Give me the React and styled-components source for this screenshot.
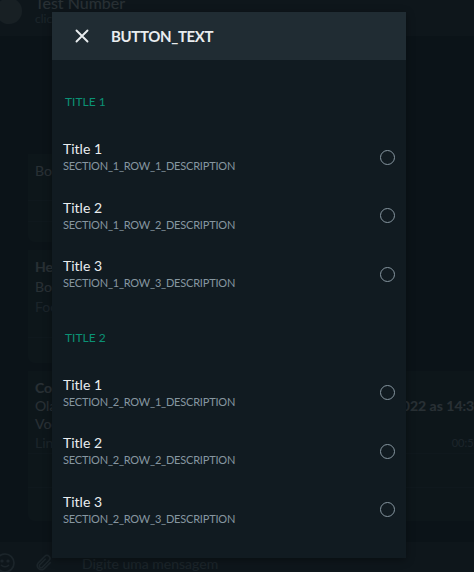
import React from "react";
import styled, { createGlobalStyle } from "styled-components";

const COLOR = {
	Panel: "#202c33",
	Chat: "#0b141a",
	Bubble: "#1b262d",
	Modal: "#111b21",
	Text: "#e9edef",
	Muted: "#8696a0",
	Accent: "#0b9275",
};

const FONT = `Lato, "Noto Sans", "Liberation Sans", sans-serif`;

var Global = createGlobalStyle`
	html, body {
		margin: 0;
		padding: 0;
		background: ${COLOR.Chat};
	}
	body {
		font-family: ${FONT};
		-webkit-font-smoothing: antialiased;
	}
	* {
		box-sizing: border-box;
	}
`;

var Screen = styled.div`
	position: relative;
	width: 474px;
	height: 572px;
	overflow: hidden;
	display: flex;
	flex-direction: column;
	background: ${COLOR.Chat};
`;

/* ---------- chat behind the modal ---------- */

var ChatHeader = styled.header`
	display: flex;
	align-items: center;
	gap: 13px;
	height: 50px;
	margin-top: -14px;
	background: ${COLOR.Panel};
	flex-shrink: 0;
`;

var Avatar = styled.div`
	width: 26px;
	height: 26px;
	margin-left: -4px;
	border-radius: 50%;
	background: #6a7175;
`;

var Who = styled.div`
	display: flex;
	flex-direction: column;
	line-height: 16px;
`;

var Name = styled.span`
	font-size: 16px;
	color: ${COLOR.Text};
`;

var Sub = styled.span`
	font-size: 12px;
	color: ${COLOR.Muted};
`;

var Messages = styled.main`
	flex: 1;
	display: flex;
	flex-direction: column;
	gap: 8px;
	padding: 118px 0 0 28px;
	overflow: hidden;
`;

var Bubble = styled.div`
	display: flex;
	flex-direction: column;
	flex-shrink: 0;
	width: ${(p) => p.$w}px;
	padding: ${(p) => p.$top || 8}px 7px 0 7px;
	background: ${COLOR.Bubble};
	border-radius: 0 7px 7px 7px;
	color: ${COLOR.Text};
	font-size: 14px;
	line-height: ${(p) => p.$lh || 18}px;
`;

var Line = styled.span`
	color: ${(p) => (p.$muted ? COLOR.Muted : COLOR.Text)};
	font-weight: ${(p) => (p.$bold ? 700 : 400)};
	white-space: nowrap;
`;

var Meta = styled.div`
	display: flex;
	align-items: center;
	justify-content: space-between;
	height: 20px;
`;

var Stamp = styled.span`
	margin-left: auto;
	font-size: 11px;
	color: ${COLOR.Muted};
	padding-right: 2px;
`;

var BubbleButton = styled.div`
	height: ${(p) => p.$h || 30}px;
	margin: 0 -7px;
	border-top: 1px solid #2a3942;
`;

var Footer = styled.footer`
	display: flex;
	align-items: center;
	gap: 18px;
	height: 30px;
	padding-top: 12px;
	background: ${COLOR.Panel};
	flex-shrink: 0;
	color: ${COLOR.Muted};
	svg {
		flex-shrink: 0;
	}
`;

var Placeholder = styled.span`
	font-size: 14px;
	margin-left: 10px;
	color: ${COLOR.Muted};
`;

var Dim = styled.div`
	position: absolute;
	inset: 0;
	background: rgba(11, 19, 24, 0.87);
`;

/* ---------- list modal ---------- */

var Modal = styled.section`
	position: absolute;
	left: 52px;
	top: 12px;
	width: 354px;
	height: 546px;
	display: flex;
	flex-direction: column;
	background: ${COLOR.Modal};
	box-shadow: 0 2px 8px rgba(0, 0, 0, 0.35);
`;

var Bar = styled.div`
	display: flex;
	align-items: center;
	gap: 22px;
	height: 48px;
	padding: 0 0 0 23px;
	background: ${COLOR.Panel};
	flex-shrink: 0;
`;

var Close = styled.button`
	all: unset;
	display: flex;
	align-items: center;
	justify-content: center;
	width: 14px;
	height: 14px;
	cursor: pointer;
`;

var BarTitle = styled.h2`
	margin: 0;
	font-size: 15px;
	font-weight: 700;
	letter-spacing: -0.35px;
	color: ${COLOR.Text};
`;

var List = styled.div`
	flex: 1;
	padding-top: 12px;
	overflow: hidden;
`;

var SectionTitle = styled.div`
	padding: 22px 12px 22px 13px;
	font-size: 12px;
	line-height: 16px;
	color: ${COLOR.Accent};
`;

var Row = styled.label`
	display: flex;
	align-items: center;
	height: 58.5px;
	padding: 0 11px 8px 11px;
	cursor: pointer;
`;

var RowText = styled.div`
	flex: 1;
	display: flex;
	flex-direction: column;
`;

var RowTitle = styled.span`
	font-size: 14px;
	line-height: 17px;
	color: ${COLOR.Text};
`;

var RowDesc = styled.span`
	font-size: 11px;
	letter-spacing: -0.2px;
	line-height: 17px;
	color: ${COLOR.Muted};
`;

var Radio = styled.span`
	width: 15px;
	height: 15px;
	border-radius: 50%;
	border: 1.6px solid ${COLOR.Muted};
	flex-shrink: 0;
`;

const sections = [1, 2].map((s) => ({
	title: `TITLE ${s}`,
	rows: [1, 2, 3].map((r) => ({
		title: `Title ${r}`,
		description: `SECTION_${s}_ROW_${r}_DESCRIPTION`,
	})),
}));

function CloseIcon() {
	return (
		<svg width="14" height="14" viewBox="0 0 14 14">
			<path d="M1.5 1.5 L12.5 12.5 M12.5 1.5 L1.5 12.5" stroke={COLOR.Text} strokeWidth="1.9" strokeLinecap="round" />
		</svg>
	);
}

function Smiley() {
	return (
		<svg width="22" height="22" viewBox="0 0 22 22" fill="none" stroke="currentColor" strokeWidth="1.6" style={{ marginLeft: -6 }}>
			<circle cx="11" cy="11" r="9" />
			<circle cx="8" cy="9" r="0.8" fill="currentColor" />
			<circle cx="14" cy="9" r="0.8" fill="currentColor" />
			<path d="M7 13 Q11 16.5 15 13" />
		</svg>
	);
}

function Clip() {
	return (
		<svg width="20" height="20" viewBox="0 0 24 24" fill="none" stroke="currentColor" strokeWidth="1.8">
			<path d="M20 11 L12 19 a5 5 0 0 1 -7 -7 L13 4 a3.5 3.5 0 0 1 5 5 L10 17 a2 2 0 0 1 -3 -3 L14 7" />
		</svg>
	);
}

export default function App() {
	return (
		<Screen>
			<Global />
			<ChatHeader>
				<Avatar />
				<Who>
					<Name>Test Number</Name>
					<Sub>click here for contact info</Sub>
				</Who>
			</ChatHeader>
			<Messages>
				<Bubble $w={340}>
					<Line>Body text of the message</Line>
					<Meta>
						<Stamp>00:50</Stamp>
					</Meta>
					<BubbleButton $h={21} />
					<BubbleButton $h={21} />
				</Bubble>
				<Bubble $w={340} $top={7} $lh={20}>
					<Line $bold>Header</Line>
					<Line>Body</Line>
					<Line $muted>Footer</Line>
					<Meta>
						<Stamp>00:51</Stamp>
					</Meta>
					<BubbleButton $h={26} />
				</Bubble>
				<Bubble $w={461}>
					<Line $bold>Consulta</Line>
					<Line>
						Olá, a consulta foi marcada com sucesso para o dia <b>10/10/2022 as 14:30H</b>
					</Line>
					<Line>Você confirma?</Line>
					<Meta>
						<Line $muted>Link</Line>
						<Stamp>00:52</Stamp>
					</Meta>
					<BubbleButton $h={34} />
					<BubbleButton $h={34} />
				</Bubble>
			</Messages>
			<Footer>
				<Smiley />
				<Clip />
				<Placeholder>Digite uma mensagem</Placeholder>
			</Footer>
			<Dim />
			<Modal>
				<Bar>
					<Close aria-label="close">
						<CloseIcon />
					</Close>
					<BarTitle>BUTTON_TEXT</BarTitle>
				</Bar>
				<List>
					{sections.map((section) => (
						<div key={section.title}>
							<SectionTitle>{section.title}</SectionTitle>
							{section.rows.map((row) => (
								<Row key={row.description}>
									<RowText>
										<RowTitle>{row.title}</RowTitle>
										<RowDesc>{row.description}</RowDesc>
									</RowText>
									<Radio />
								</Row>
							))}
						</div>
					))}
				</List>
			</Modal>
		</Screen>
	);
}
